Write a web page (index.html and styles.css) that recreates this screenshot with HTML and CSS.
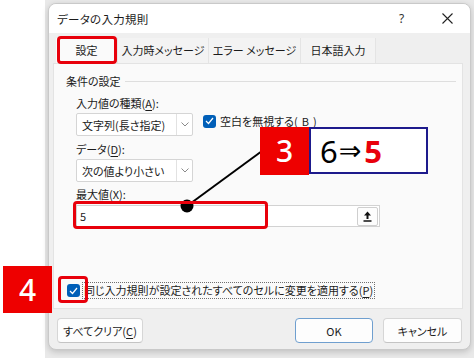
FILE: index.html
```html
<!DOCTYPE html>
<html lang="ja">
<head>
  <meta charset="UTF-8" />
  <title>データの入力規則</title>
  <link rel="stylesheet" href="styles.css">
</head>
<body>
  <div class="dialog">
    <div class="titlebar">
      <span class="title">データの入力規則</span>
      <span class="help">?</span>
      <span class="close">
        <svg width="11" height="11" viewBox="0 0 11 11"><path d="M0.5 0.5 L10.5 10.5 M10.5 0.5 L0.5 10.5" stroke="#222" stroke-width="1.1"/></svg>
      </span>
    </div>

    <div class="tabs">
      <div class="tab active">設定</div>
      <div class="tab">入力時メッセージ</div>
      <div class="tab">エラー メッセージ</div>
      <div class="tab">日本語入力</div>
    </div>

    <div class="panel">
      <div class="group-head"><span>条件の設定</span><i></i></div>

      <div class="field">
        <label>入力値の種類(<u>A</u>):</label>
        <div class="row">
          <div class="combo"><span>文字列(長さ指定)</span><b class="drop"><svg width="8" height="5" viewBox="0 0 8 5"><path d="M0.5 0.5 L4 4 L7.5 0.5" fill="none" stroke="#8a8a8a"/></svg></b></div>
          <div class="check-label"><span class="check"><svg width="9" height="8" viewBox="0 0 9 8"><path d="M1 4 L3.5 6.5 L8 1" fill="none" stroke="#fff" stroke-width="1.2"/></svg></span>空白を無視する(<u>B</u>)</div>
        </div>
      </div>

      <div class="field">
        <label>データ(<u>D</u>):</label>
        <div class="combo"><span>次の値より小さい</span><b class="drop"><svg width="8" height="5" viewBox="0 0 8 5"><path d="M0.5 0.5 L4 4 L7.5 0.5" fill="none" stroke="#8a8a8a"/></svg></b></div>
      </div>

      <div class="field">
        <label>最大値(<u>X</u>):</label>
        <div class="textbox">
          <span>5</span>
          <b class="pick"><svg width="9" height="11" viewBox="0 0 9 11"><path d="M4.5 0.5 L8 4.5 L5.5 4.5 L5.5 8 L3.5 8 L3.5 4.5 L1 4.5 Z" fill="#111"/><path d="M0.5 10 L8.5 10" stroke="#111" stroke-width="1.3"/></svg></b>
        </div>
      </div>

      <div class="apply-row">
        <span class="check"><svg width="9" height="8" viewBox="0 0 9 8"><path d="M1 4 L3.5 6.5 L8 1" fill="none" stroke="#fff" stroke-width="1.2"/></svg></span>
        <span class="focus">同じ入力規則が設定されたすべてのセルに変更を適用する(<u>P</u>)</span>
      </div>
    </div>

    <div class="footer">
      <button class="btn clear">すべてクリア(<u>C</u>)</button>
      <button class="btn ok">OK</button>
      <button class="btn cancel">キャンセル</button>
    </div>
  </div>

  <!-- annotations over the screenshot -->
  <svg class="pointer" width="474" height="358"><line x1="187" y1="206" x2="262" y2="151" stroke="#000" stroke-width="2"/><circle cx="187" cy="206" r="6.5" fill="#000"/></svg>
  <div class="mark mark-tab"></div>
  <div class="mark mark-input"></div>
  <div class="mark mark-check"></div>
  <div class="callout">
    <div class="num">3</div>
    <div class="note">6<span class="arrow">⇒</span><span class="red">5</span></div>
  </div>
  <div class="num num4">4</div>
</body>
</html>
```

FILE: styles.css
```css
* {
  box-sizing: border-box;
}
html, body {
  margin: 0;
  height: 358px;
  overflow: hidden;
}
body {
  position: relative;
  padding: 3px 0 0 48px;
  background: linear-gradient(to right, #fff 45px, #e9e9e9 45px);
  font-family: "Noto Sans CJK JP", "Noto Sans", sans-serif;
  font-size: 11px;
  line-height: 16px;
  color: #1b1b1b;
  font-feature-settings: "palt";
}
u {
  text-decoration-thickness: 1px;
  text-underline-offset: 2px;
}
.dialog {
  width: 423px;
  height: 347px;
  background: #efefef;
  border: 1px solid #c9c9c9;
  border-radius: 8px;
  box-shadow: 0 2px 6px rgba(0, 0, 0, 0.18);
  overflow: hidden;
  display: flex;
  flex-direction: column;
}
.titlebar {
  height: 29px;
  background: #fff;
  display: flex;
  align-items: center;
  padding: 0 0 0 8px;
  flex-shrink: 0;
}
.title {
  flex: 1;
  font-size: 11.5px;
  letter-spacing: 0.3px;
}
.help {
  width: 14px;
  color: #333;
  font-family: "Noto Sans", sans-serif;
  font-size: 12px;
  margin-right: 29px;
}
.close {
  display: flex;
  margin-right: 17px;
}
.tabs {
  display: flex;
  padding: 5px 0 0 7px;
  height: 30px;
  flex-shrink: 0;
}
.tab {
  height: 25px;
  line-height: 25px;
  text-align: center;
  background: #f3f3f3;
  border-right: 1px solid #e4e4e4;
  white-space: nowrap;
}
.tab:nth-child(1) { width: 62px; }
.tab:nth-child(2) { width: 91px; }
.tab:nth-child(3) { width: 92px; }
.tab:nth-child(4) { width: 75px; }
.tab.active {
  background: #fafafa;
}
.panel {
  margin: 0 0 0 4px;
  width: 410px;
  height: 246px;
  background: #fafafa;
  border: 1px solid #e3e3e3;
  padding: 9px 0 0 12px;
  flex-shrink: 0;
}
.group-head {
  display: flex;
  align-items: center;
  gap: 4px;
}
.group-head span {
  white-space: nowrap;
  flex-shrink: 0;
}
.group-head i {
  display: block;
  flex: 1;
  margin-right: 6px;
  height: 1px;
  background: #dedede;
}
.field {
  padding-left: 10px;
}
.field label {
  display: block;
}
.field:nth-of-type(2) { margin-top: 6px; }
.field:nth-of-type(3) { margin-top: 5px; }
.field:nth-of-type(4) { margin-top: 4px; }
.row {
  display: flex;
  align-items: center;
  gap: 10px;
  margin-top: 2px;
}
.combo {
  width: 117px;
  height: 23px;
  margin-top: 2px;
  display: flex;
  align-items: center;
  background: #fff;
  border: 1px solid #d5d5d5;
  border-radius: 2px;
}
.row .combo {
  margin-top: 0;
}
.combo span {
  flex: 1;
  padding-left: 5px;
  white-space: nowrap;
}
.drop {
  width: 16px;
  height: 21px;
  border-left: 1px solid #e2e2e2;
  display: flex;
  align-items: center;
  justify-content: center;
}
.check-label {
  display: flex;
  align-items: center;
  gap: 4px;
  margin-top: -7px;
}
.check {
  width: 13px;
  height: 13px;
  border-radius: 3px;
  background: #005fb8;
  display: flex;
  align-items: center;
  justify-content: center;
}
.textbox {
  width: 304px;
  height: 22px;
  margin-top: 3px;
  background: #fff;
  border: 1px solid #d2d2d2;
  display: flex;
  align-items: center;
  justify-content: space-between;
  padding: 0 1px 0 3px;
}
.pick {
  width: 21px;
  height: 19px;
  border: 1px solid #cfcfcf;
  border-radius: 2px;
  background: #fdfdfd;
  display: flex;
  align-items: center;
  justify-content: center;
}
.apply-row {
  display: flex;
  align-items: center;
  gap: 2px;
  margin-top: 55px;
  padding-left: 1px;
}
.focus {
  border: 1px dotted #6f6f6f;
  padding: 0 1px;
  line-height: 15px;
  white-space: nowrap;
}
.footer {
  display: flex;
  padding: 9px 0 0 8px;
}
.btn {
  height: 25px;
  font: inherit;
  color: #1b1b1b;
  background: #fdfdfd;
  border: 1px solid #d6d6d6;
  border-bottom-color: #c4c4c4;
  border-radius: 4px;
  padding: 0;
}
.clear {
  width: 86px;
}
.ok {
  width: 78px;
  margin-left: auto;
  border-color: #6f9fcf;
}
.cancel {
  width: 79px;
  margin: 0 8px 0 10px;
}
/* annotations */
.pointer {
  position: absolute;
  left: 0;
  top: 0;
  pointer-events: none;
}
.mark {
  position: absolute;
  border: 3px solid #e8000b;
  border-radius: 4px;
}
.mark-tab {
  left: 57px;
  top: 36px;
  width: 60px;
  height: 28px;
}
.mark-input {
  left: 73px;
  top: 201px;
  width: 195px;
  height: 28px;
}
.mark-check {
  left: 58px;
  top: 276px;
  width: 30px;
  height: 27px;
}
.callout {
  position: absolute;
  left: 260px;
  top: 127px;
  display: flex;
}
.num {
  width: 49px;
  height: 48px;
  background: #ee0000;
  color: #fff;
  font-family: "Noto Sans", sans-serif;
  font-size: 30px;
  font-weight: 500;
  display: flex;
  align-items: center;
  justify-content: center;
}
.note {
  width: 119px;
  height: 47px;
  background: #fff;
  border: 2px solid #1d1a8c;
  font-family: "Noto Sans", sans-serif;
  font-size: 31px;
  display: flex;
  align-items: center;
  padding-left: 9px;
  color: #000;
}
.arrow {
  font-family: "DejaVu Sans", sans-serif;
  font-size: 27px;
  margin: 0 3px 0 1px;
}
.red {
  color: #e8000b;
  font-weight: bold;
}
.num4 {
  position: absolute;
  left: 3px;
  top: 266px;
  width: 49px;
  height: 47px;
}
```
